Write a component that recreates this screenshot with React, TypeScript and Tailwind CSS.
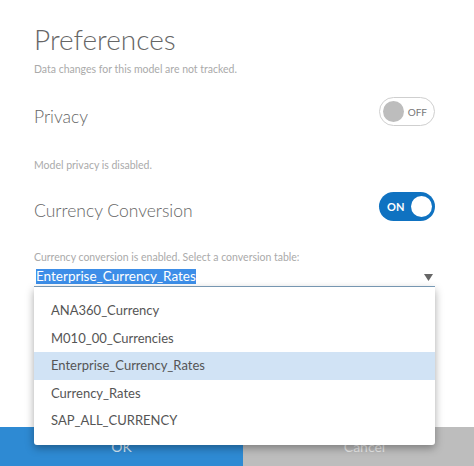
import React from 'react';

const options = [
  'ANA360_Currency',
  'M010_00_Currencies',
  'Enterprise_Currency_Rates',
  'Currency_Rates',
  'SAP_ALL_CURRENCY',
];

function Toggle({ on }: { on: boolean }) {
  if (on) {
    return (
      <div className="flex items-center justify-between w-[56px] h-[29px] rounded-full bg-[#0f72c1] pl-[8px] pr-[3px] shrink-0">
        <span className="text-[11px] font-bold text-white leading-none">ON</span>
        <span className="w-[21px] h-[21px] rounded-full bg-white" />
      </div>
    );
  }
  return (
    <div className="flex items-center justify-between w-[56px] h-[29px] rounded-full border border-[#cfcfcf] bg-white pl-[3px] pr-[7px] shrink-0">
      <span className="w-[21px] h-[21px] rounded-full bg-[#bdbdbd]" />
      <span className="text-[10px] text-[#777] leading-none">OFF</span>
    </div>
  );
}

export default function App() {
  const selected = 'Enterprise_Currency_Rates';

  return (
    <div className="w-[474px] h-[466px] bg-white flex flex-col overflow-hidden font-['Lato',sans-serif]">
      <div className="relative flex-1 flex flex-col pl-[34px] pr-[39px]">
        {/* Header */}
        <h1 className="mt-[22px] text-[28px] leading-[34px] font-light text-[#666]">Preferences</h1>
        <p className="mt-[6px] text-[10.5px] leading-[14px] text-[#aaa]">Data changes for this model are not tracked.</p>

        {/* Privacy */}
        <div className="mt-[21px] flex items-start justify-between">
          <span className="mt-[10px] text-[17.5px] leading-[20px] font-light text-[#666]">Privacy</span>
          <Toggle on={false} />
        </div>
        <p className="mt-[31px] text-[10.5px] leading-[14px] text-[#aaa]">Model privacy is disabled.</p>

        {/* Currency conversion */}
        <div className="mt-[20px] flex items-start justify-between">
          <span className="mt-[9px] text-[17.5px] leading-[20px] font-light text-[#666]">Currency Conversion</span>
          <Toggle on />
        </div>
        <p className="mt-[29px] text-[10.5px] leading-[14px] text-[#aaa]">
          Currency conversion is enabled. Select a conversion table:
        </p>

        {/* Select */}
        <div className="relative mt-[5px]">
          <div className="flex items-center justify-between pb-[2px] border-b border-[#7fa2bf]">
            <span className="ml-[2px] text-[13.5px] leading-[15px] bg-[#3d8ee8] text-white">{selected}</span>
            <svg width="9" height="7" viewBox="0 0 9 7" className="mr-[2px] mt-[2px]">
              <path d="M0 0 H9 L4.5 7 Z" fill="#666" />
            </svg>
          </div>

          {/* Open dropdown menu */}
          <ul className="absolute left-0 right-0 top-full z-10 py-[10px] bg-white rounded-b-[3px] shadow-[0_3px_8px_rgba(0,0,0,0.35)]">
            {options.map((opt) => (
              <li
                key={opt}
                className={`h-[27.5px] flex items-center pl-[17px] text-[13px] text-[#555] ${
                  opt === selected ? 'bg-[#d1e3f5]' : ''
                }`}
              >
                {opt}
              </li>
            ))}
          </ul>
        </div>
      </div>

      {/* Footer buttons */}
      <div className="flex h-[39px] shrink-0">
        <button type="button" className="w-[243px] shrink-0 bg-[#2e8ad3] text-[14px] text-[#d6e8f7]">
          OK
        </button>
        <button type="button" className="w-[243px] shrink-0 bg-[#bdbdbd] text-[14px] text-[#ececec]">
          Cancel
        </button>
      </div>
    </div>
  );
}
